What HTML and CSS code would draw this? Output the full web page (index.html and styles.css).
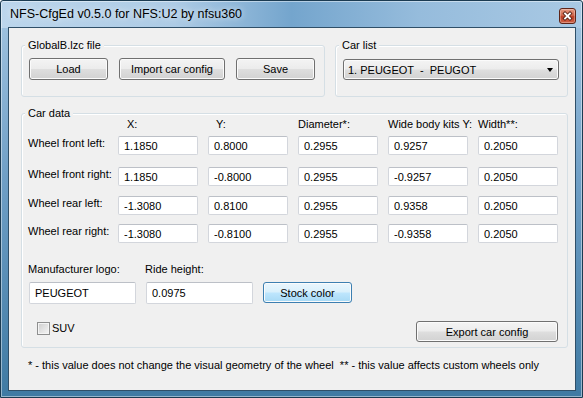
FILE: index.html
```html
<!DOCTYPE html>
<html lang="en">
<head>
    <meta charset="UTF-8">
    <title>NFS-CfgEd</title>
    <link rel="stylesheet" href="styles.css">
</head>
<body>
    <div class="window">
        <div class="titlebar">
            <span class="title">NFS-CfgEd v0.5.0 for NFS:U2 by nfsu360</span>
            <button class="close" type="button">
                <svg width="15" height="14" viewBox="0 0 15 14">
                    <path d="M5 4.5 L10 9.5 M10 4.5 L5 9.5" stroke="#5a2418" stroke-width="3.6" stroke-linecap="square" fill="none"/>
                    <path d="M5 4.5 L10 9.5 M10 4.5 L5 9.5" stroke="#ffffff" stroke-width="1.8" stroke-linecap="square" fill="none"/>
                </svg>
            </button>
        </div>

        <div class="client">
            <div class="top-row">
                <div class="group file-group">
                    <div class="group-title">GlobalB.lzc file</div>
                    <div class="file-body">
                        <button class="btn btn-load" type="button">Load</button>
                        <button class="btn btn-import" type="button">Import car config</button>
                        <button class="btn btn-save" type="button">Save</button>
                    </div>
                </div>
                <div class="group list-group">
                    <div class="group-title">Car list</div>
                    <div class="list-body">
                        <div class="combo">
                            <span class="combo-text">1. PEUGEOT  -  PEUGOT</span>
                            <span class="combo-arrow"></span>
                        </div>
                    </div>
                </div>
            </div>

            <div class="group data-group">
                <div class="group-title">Car data</div>
                <div class="data-body">
                    <div class="wheel-grid">
                        <span></span>
                        <span class="col-head head-x">X:</span>
                        <span class="col-head head-y">Y:</span>
                        <span class="col-head">Diameter*:</span>
                        <span class="col-head">Wide body kits Y:</span>
                        <span class="col-head">Width**:</span>

                        <label class="row-label">Wheel front left:</label>
                        <input class="cell" type="text" value="1.1850">
                        <input class="cell" type="text" value="0.8000">
                        <input class="cell" type="text" value="0.2955">
                        <input class="cell" type="text" value="0.9257">
                        <input class="cell" type="text" value="0.2050">

                        <label class="row-label">Wheel front right:</label>
                        <input class="cell" type="text" value="1.1850">
                        <input class="cell" type="text" value="-0.8000">
                        <input class="cell" type="text" value="0.2955">
                        <input class="cell" type="text" value="-0.9257">
                        <input class="cell" type="text" value="0.2050">

                        <label class="row-label">Wheel rear left:</label>
                        <input class="cell" type="text" value="-1.3080">
                        <input class="cell" type="text" value="0.8100">
                        <input class="cell" type="text" value="0.2955">
                        <input class="cell" type="text" value="0.9358">
                        <input class="cell" type="text" value="0.2050">

                        <label class="row-label">Wheel rear right:</label>
                        <input class="cell" type="text" value="-1.3080">
                        <input class="cell" type="text" value="-0.8100">
                        <input class="cell" type="text" value="0.2955">
                        <input class="cell" type="text" value="-0.9358">
                        <input class="cell" type="text" value="0.2050">
                    </div>

                    <div class="extra-row">
                        <div class="field">
                            <label>Manufacturer logo:</label>
                            <input class="wide-input" type="text" value="PEUGEOT">
                        </div>
                        <div class="field">
                            <label>Ride height:</label>
                            <input class="wide-input" type="text" value="0.0975">
                        </div>
                        <button class="btn btn-stock" type="button">Stock color</button>
                    </div>

                    <div class="bottom-row">
                        <label class="check"><span class="check-box"></span>SUV</label>
                        <button class="btn btn-export" type="button">Export car config</button>
                    </div>
                </div>
            </div>

            <p class="note">* - this value does not change the visual geometry of the wheel  ** - this value affects custom wheels only</p>
        </div>
    </div>
</body>
</html>
```

FILE: styles.css
```css
/* Win7 style dialog */
body {
    margin: 0;
    font-family: "Liberation Sans", Arial, sans-serif;
    font-size: 11px;
    color: #000;
    background: #fff;
}
.window {
    width: 583px;
    height: 398px;
    box-sizing: border-box;
    border: 1px solid #1b3b52;
    border-radius: 3px 3px 0 0;
    padding: 0 6px 6px 7px;
    background:
        linear-gradient(to right, #bcd6ec 0%, #adcbe5 30%, #74a5cd 50%, #96bcdc 72%, #a9c9e4 100%) top / 100% 27px no-repeat,
        linear-gradient(#a4c6e2, #6f9fc6 45%, #3f7aa3 100%);
    box-shadow: inset 0 0 0 1px rgba(255, 255, 255, 0.45);
}
.titlebar {
    height: 26px;
    display: flex;
    justify-content: space-between;
    align-items: flex-start;
}
.title {
    margin: 6px 0 0 2px;
    font-size: 12.5px;
    line-height: 15px;
    color: #000;
    text-shadow: 0 0 6px rgba(255, 255, 255, 0.9);
}
.close {
    width: 17px;
    height: 16px;
    margin-top: 7px;
    padding: 0;
    box-sizing: border-box;
    border: 1px solid #5e2418;
    border-radius: 3px;
    background: linear-gradient(#e59a82, #d0674b 45%, #bd3e24 55%, #cf6247);
    box-shadow: inset 0 0 0 1px rgba(255, 255, 255, 0.3);
    display: flex;
    align-items: center;
    justify-content: center;
}
.client {
    height: 364px;
    box-sizing: border-box;
    border: 1px solid #2f4f68;
    background: #f0f0f0;
    padding: 17px 7px 0 12px;
}
.top-row {
    display: flex;
    gap: 10px;
}
.group {
    box-sizing: border-box;
    border: 1px solid #d5dfe5;
    border-radius: 3px;
    box-shadow: inset 1px 1px 0 #fff;
}
.group-title {
    width: fit-content;
    margin: -8px 0 0 3px;
    padding: 0 3px;
    line-height: 14px;
    background: #f0f0f0;
}
.file-group {
    width: 304px;
}
.list-group {
    flex: 1;
}
.file-body {
    display: flex;
    gap: 11px;
    padding: 6px 9px 16px 7px;
}
.list-body {
    padding: 7px 8px 16px 7px;
}
.btn {
    box-sizing: border-box;
    height: 22px;
    padding: 0;
    border: 1px solid #707070;
    border-radius: 3px;
    background: linear-gradient(#f4f4f4, #ececec 48%, #dedede 52%, #d2d2d2);
    box-shadow: inset 0 0 0 1px #fbfbfb;
    font-family: "Liberation Sans", Arial, sans-serif;
    font-size: 11px;
    color: #000;
}
.btn-load,
.btn-save {
    width: 79px;
}
.btn-import {
    width: 106px;
}
.combo {
    height: 21px;
    box-sizing: border-box;
    border: 1px solid #707070;
    border-radius: 3px;
    background: linear-gradient(#f4f4f4, #ececec 48%, #dedede 52%, #d2d2d2);
    box-shadow: inset 0 0 0 1px #fbfbfb;
    display: flex;
    align-items: center;
    justify-content: space-between;
    padding: 0 5px 0 4px;
}
.combo-text {
    white-space: pre;
}
.combo-arrow {
    width: 0;
    height: 0;
    border-top: 4px solid #000;
    border-left: 3.5px solid transparent;
    border-right: 3.5px solid transparent;
    margin-top: 1px;
}
.data-group {
    margin-top: 16px;
}
.data-body {
    padding: 0 9px 5px 6px;
}
.wheel-grid {
    margin-top: -3px;
    display: grid;
    grid-template-columns: 80px repeat(5, 80px);
    grid-template-rows: 19px 31px 29px 28px 19px;
    column-gap: 10px;
    align-items: start;
}
.col-head,
.row-label {
    line-height: 14px;
    white-space: nowrap;
}
.head-x {
    padding-left: 9px;
}
.head-y {
    padding-left: 8px;
}
.cell,
.wide-input {
    box-sizing: border-box;
    margin: 0;
    padding: 0 0 0 5px;
    border: 1px solid #d3d6dc;
    border-top-color: #bcc0c7;
    border-radius: 2px;
    background: #fff;
    font-family: "Liberation Sans", Arial, sans-serif;
    font-size: 11px;
    color: #000;
}
.cell {
    width: 80px;
    height: 19px;
}
.extra-row {
    margin-top: 19px;
    display: flex;
    gap: 9px;
    align-items: flex-end;
}
.field {
    width: 108px;
    display: flex;
    flex-direction: column;
    gap: 6px;
}
.field label {
    line-height: 14px;
}
.wide-input {
    width: 107px;
    height: 22px;
    margin-left: 1px;
}
.btn-stock {
    width: 89px;
    height: 21px;
    margin: 0 0 1px 1px;
    border-color: #3c7fb1;
    background: linear-gradient(#eaf6fd, #d9f0fc 48%, #bee6fd 52%, #a7d9f5);
}
.bottom-row {
    margin-top: 17px;
    display: flex;
    justify-content: space-between;
    align-items: flex-start;
}
.check {
    display: flex;
    align-items: center;
    gap: 2px;
    margin: 1px 0 0 9px;
    line-height: 13px;
}
.check-box {
    width: 13px;
    height: 13px;
    box-sizing: border-box;
    border: 1px solid #8e8f8f;
    background: linear-gradient(135deg, #cdcdcd, #f6f6f6);
    box-shadow: inset 0 0 0 1px #f4f4f4;
}
.btn-export {
    width: 142px;
    height: 21px;
}
.note {
    margin: 10px 0 0;
    padding-left: 7px;
    line-height: 14px;
    white-space: pre;
}
```
